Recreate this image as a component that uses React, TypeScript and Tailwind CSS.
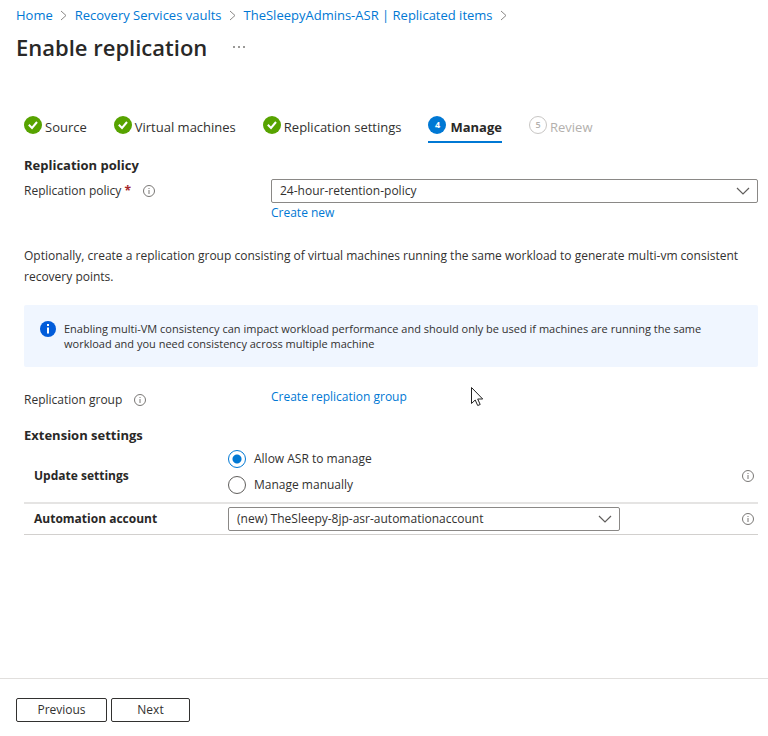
import React from "react";

const Separator = () => (
  <svg className="mx-[7px] h-3 w-2 shrink-0" viewBox="0 0 8 12" fill="none" stroke="#8a8886" aria-hidden="true">
    <path d="M1 2l5 4.500L1 11" />
  </svg>
);

const Check = () => (
  <svg className="size-[18px] shrink-0" viewBox="0 0 18 18" aria-hidden="true">
    <circle cx="9" cy="9" r="9" fill="#57a300" />
    <path d="M4.800 8.800l3.200 3.200 5-6" fill="none" stroke="#fff" strokeWidth="2" />
  </svg>
);

const Info = ({ label }: { label: string }) => (
  <button type="button" aria-label={label} className="flex size-3 shrink-0 items-center">
    <svg className="size-3" viewBox="0 0 12 12" fill="none" stroke="#797775" aria-hidden="true">
      <circle cx="6" cy="6" r="5.500" />
      <path d="M6 5v4M6 3v1" />
    </svg>
  </button>
);

const Dropdown = ({ id, value }: { id: string; value: string }) => (
  <div className="relative w-full">
    <select
      id={id}
      className="block h-6 w-full appearance-none rounded-[2px] border border-[#8a8886] bg-white pr-8 pl-2 text-[#323130]"
    >
      <option>{value}</option>
    </select>
    <svg
      className="pointer-events-none absolute top-2 right-2 h-2 w-3.5"
      viewBox="0 0 14 8"
      fill="none"
      stroke="#605e5c"
      strokeWidth="1.200"
      aria-hidden="true"
    >
      <path d="M1 1l6 6 6-6" />
    </svg>
  </div>
);

const Radio = ({ label, checked }: { label: string; checked?: boolean }) => (
  <label className="flex items-center gap-2">
    <input
      type="radio"
      name="update"
      defaultChecked={checked}
      className="size-[18px] appearance-none rounded-full border border-[#605e5c] bg-white checked:border-[#0078d4] checked:bg-[radial-gradient(circle,#0078d4_0_4px,transparent_5px)]"
    />
    {label}
  </label>
);

const crumbs = ["Home", "Recovery Services vaults", "TheSleepyAdmins-ASR | Replicated items"];
const doneSteps = ["Source", "Virtual machines", "Replication settings"];

export default function App() {
  return (
    <div className="flex min-h-screen flex-col bg-white font-['Open_Sans','Noto_Sans',sans-serif] text-xs leading-5 text-[#323130]">
      <header className="px-4 pt-[3px]">
        <nav aria-label="Breadcrumb" className="flex h-6 items-center text-[13px] text-[#0078d4]">
          {crumbs.map((c) => (
            <React.Fragment key={c}>
              <a href="#">{c}</a>
              <Separator />
            </React.Fragment>
          ))}
        </nav>
        <div className="flex h-10 items-center gap-6">
          <h1 className="text-[22px] font-semibold text-[#292827]">Enable replication</h1>
          <button type="button" aria-label="More" className="flex gap-[3px] p-0.5">
            <span className="size-0.5 rounded-full bg-[#797775]" />
            <span className="size-0.5 rounded-full bg-[#797775]" />
            <span className="size-0.5 rounded-full bg-[#797775]" />
          </button>
        </div>
      </header>

      <main className="grow pr-2.5 pl-6">
        <nav aria-label="Steps" className="mt-[49px] flex items-start gap-[27px] text-[13px] leading-[22px]">
          {doneSteps.map((s) => (
            <a key={s} href="#" className="flex items-start gap-[3px]">
              <Check />
              {s}
            </a>
          ))}
          <a
            href="#"
            aria-current="step"
            className="flex h-[27px] items-start gap-1 border-b-2 border-[#0078d4] font-bold text-[#292827]"
          >
            <span className="flex size-[18px] items-center justify-center rounded-full bg-[#0078d4] text-[9px] text-white">
              4
            </span>
            Manage
          </a>
          <a href="#" className="flex items-start gap-[3px] text-[#b3b0ad]">
            <span className="flex size-[18px] items-center justify-center rounded-full border border-[#c8c6c4] text-[9px] font-semibold">
              5
            </span>
            Review
          </a>
        </nav>

        <h2 className="mt-3 text-[13px] font-bold text-[#292827]">Replication policy</h2>
        <div className="mt-1 flex items-start">
          <div className="flex h-6 w-[247px] shrink-0 items-center gap-3">
            <label htmlFor="policy">
              Replication policy <span className="font-bold text-[#a4262c]">*</span>
            </label>
            <Info label="About replication policy" />
          </div>
          <div className="grow">
            <Dropdown id="policy" value="24-hour-retention-policy" />
            <a href="#" className="block w-fit leading-5 text-[#0078d4]">
              Create new
            </a>
          </div>
        </div>

        <p className="mt-[22px] leading-[21px]">
          Optionally, create a replication group consisting of virtual machines running the same workload to generate multi-vm
          consistent recovery points.
        </p>

        <div className="mt-[18px] flex gap-2 rounded-[2px] bg-[#f0f6ff] py-4 pr-8 pl-4 text-[11px] leading-[15px]">
          <svg className="size-4 shrink-0" viewBox="0 0 16 16" aria-hidden="true">
            <circle cx="8" cy="8" r="8" fill="#015cda" />
            <path d="M8 3v2M8 6.500v6" stroke="#fff" strokeWidth="2" />
          </svg>
          <p>
            Enabling multi-VM consistency can impact workload performance and should only be used if machines are running the
            same workload and you need consistency across multiple machine
          </p>
        </div>

        <div className="mt-5 flex">
          <div className="flex w-[247px] shrink-0 items-center gap-3 pt-[3px]">
            Replication group
            <Info label="About replication group" />
          </div>
          <a href="#" className="text-[#0078d4]">
            Create replication group
          </a>
          <svg className="ml-16 h-5 w-3" viewBox="0 0 12 20" fill="#fff" stroke="#222" aria-hidden="true">
            <path d="M.5.500v16l3.700-3.500 2.500 5.500 2.500-1-2.500-5.500h5z" />
          </svg>
        </div>

        <h2 className="mt-[15px] text-[13px] font-bold text-[#292827]">Extension settings</h2>
        <div
          role="radiogroup"
          aria-labelledby="update-label"
          className="flex items-center border-b-2 border-[#e5e4e3] pt-1 pr-1 pb-[7px] pl-2.5"
        >
          <span id="update-label" className="w-[194px] shrink-0 pt-2 font-bold text-[#292827]">
            Update settings
          </span>
          <div className="flex grow flex-col gap-1.5">
            <Radio label="Allow ASR to manage" checked />
            <Radio label="Manage manually" />
          </div>
          <div className="pt-2">
            <Info label="About update settings" />
          </div>
        </div>
        <div className="flex items-center border-b border-[#d2d0ce] pt-[3px] pr-1 pb-[3px] pl-2.5">
          <label htmlFor="account" className="w-[194px] shrink-0 font-bold text-[#292827]">
            Automation account
          </label>
          <div className="grow">
            <div className="w-full max-w-[392px]">
              <Dropdown id="account" value="(new) TheSleepy-8jp-asr-automationaccount" />
            </div>
          </div>
          <Info label="About automation account" />
        </div>
      </main>

      <footer className="flex gap-1 border-t border-[#e1dfdd] px-4 pt-[19px] pb-3.5">
        <button type="button" className="h-6 w-[91px] rounded-[2px] border border-[#323130]">
          Previous
        </button>
        <button type="button" className="h-6 w-[79px] rounded-[2px] border border-[#323130]">
          Next
        </button>
      </footer>
    </div>
  );
}
